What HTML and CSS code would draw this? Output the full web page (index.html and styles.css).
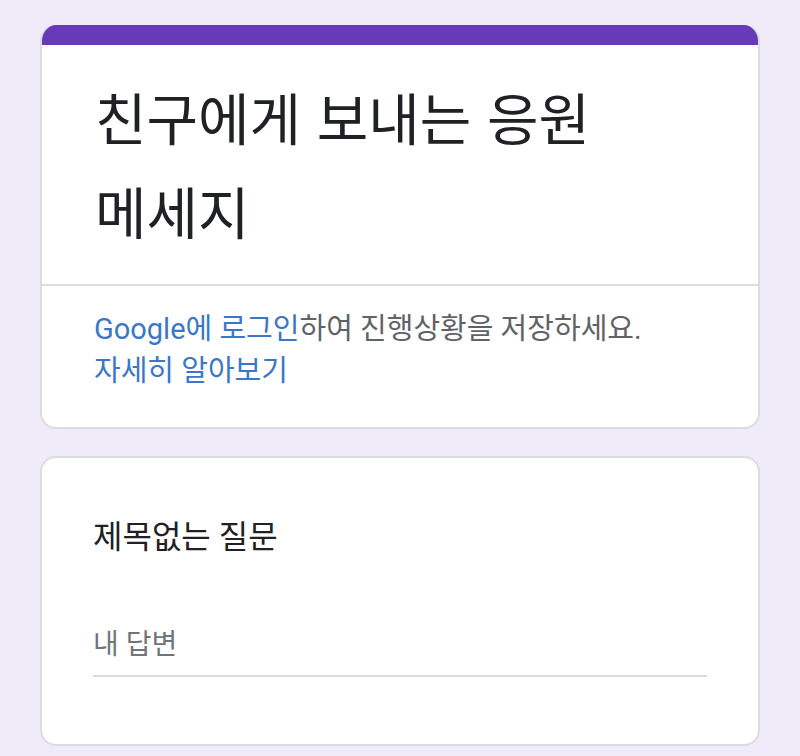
FILE: index.html
```html
<!DOCTYPE html>
<html lang="ko">
<head>
<meta charset="utf-8">
<title>친구에게 보내는 응원 메세지</title>
<link rel="stylesheet" href="styles.css">
</head>
<body>
<main class="form">
  <section class="card header-card">
    <div class="accent"></div>
    <div class="title-block">
      <h1 class="title">친구에게 보내는 응원 메세지</h1>
    </div>
    <div class="notice">
      <p><a class="link" href="#">Google에 로그인</a>하여 진행상황을 저장하세요.<br><a class="link" href="#">자세히 알아보기</a></p>
    </div>
  </section>
  <section class="card question-card">
    <div class="q-title">제목없는 질문</div>
    <div class="answer">내 답변</div>
  </section>
</main>
</body>
</html>
```

FILE: styles.css
```css
html, body {
  margin: 0;
  padding: 0;
}
body {
  background: #f0ebf8;
  font-family: "Roboto", "Noto Sans CJK KR", sans-serif;
  color: #202124;
  word-break: keep-all;
}
.form {
  display: flex;
  flex-direction: column;
  gap: 27px;
  padding: 25px 40px 0;
}
.card {
  background: #fff;
  border: 2px solid #dadce0;
  border-radius: 16px;
  overflow: hidden;
}
.header-card {
  border-top: none;
}
.accent {
  height: 20px;
  background: #673ab7;
}
.title-block {
  padding: 24px 51px 27px 53px;
  border-bottom: 2px solid #dadce0;
}
.title {
  margin: 0;
  font-family: "Noto Sans CJK KR", sans-serif;
  font-weight: 400;
  font-size: 56px;
  line-height: 94px;
  color: #202124;
}
.notice {
  padding: 22px 51px 35px 52px;
}
.notice p {
  margin: 0;
  font-size: 29px;
  line-height: 42px;
  color: #5f6368;
}
.link {
  color: #3a77c8;
  text-decoration: none;
}
.question-card {
  padding: 59px 51px 67px;
}
.q-title {
  font-size: 32px;
  line-height: 40px;
  color: #202124;
}
.answer {
  margin-top: 68px;
  font-size: 28px;
  line-height: 40px;
  color: #70757a;
  padding-bottom: 10px;
  border-bottom: 2px solid #dadce0;
}
```
